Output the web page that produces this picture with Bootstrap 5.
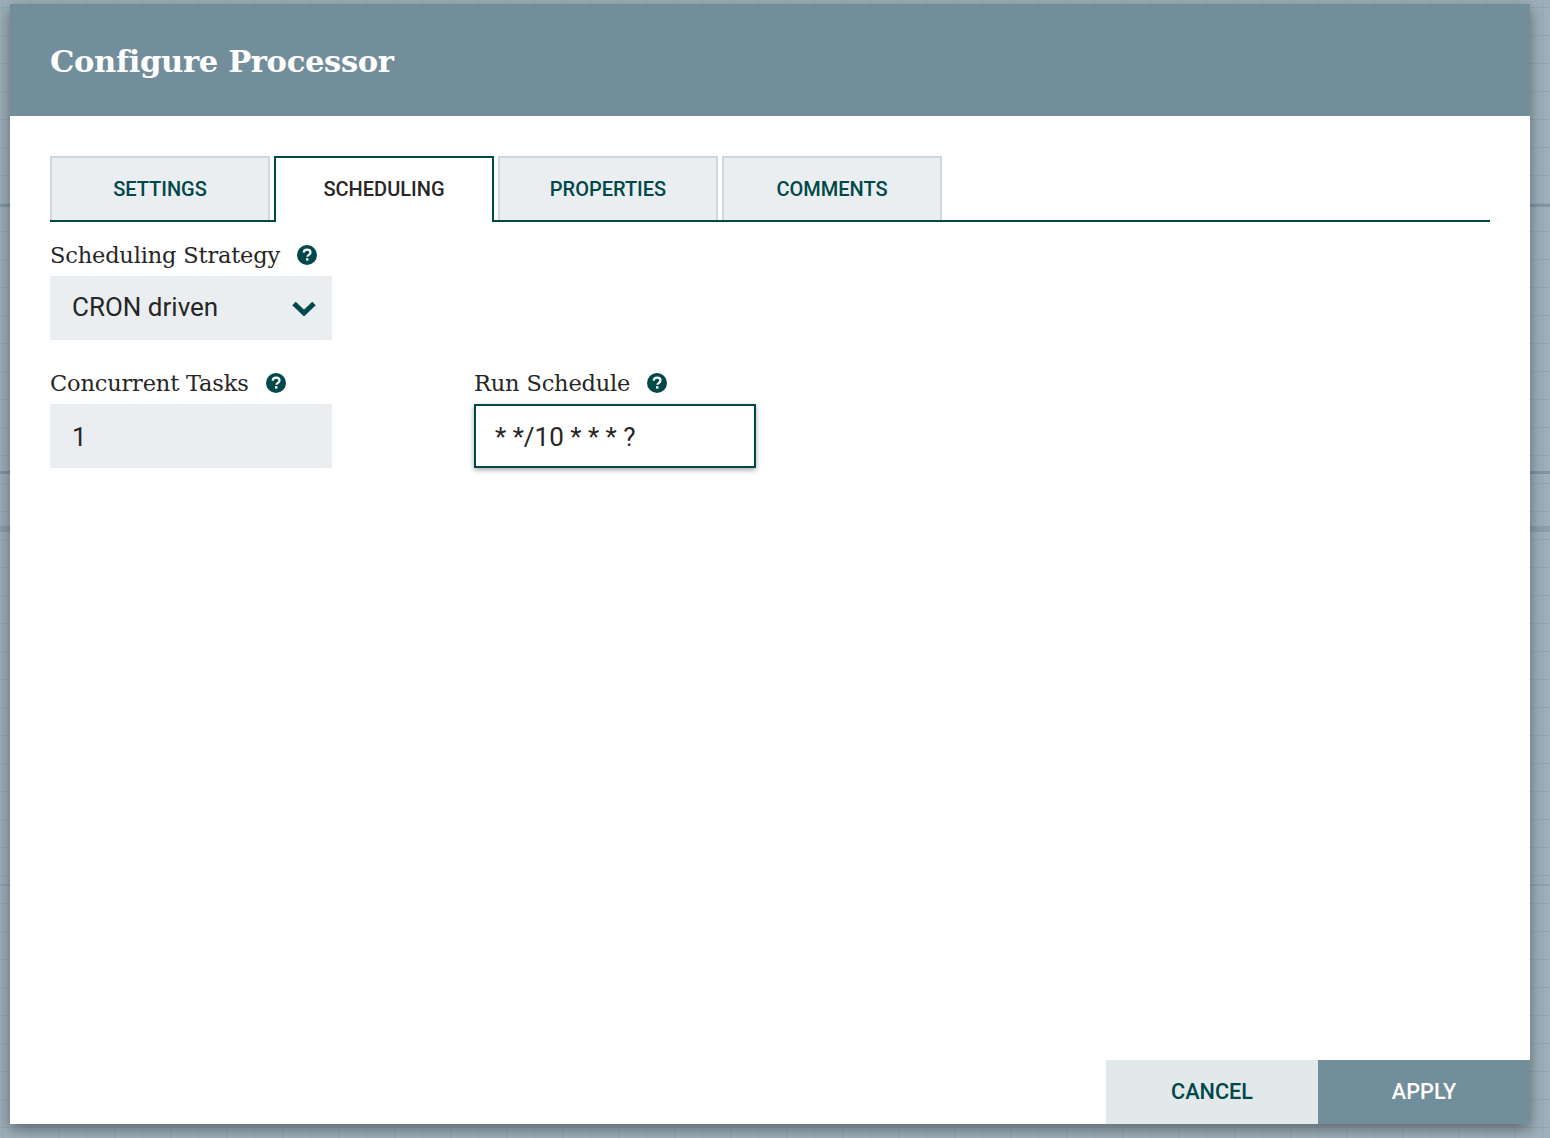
<!DOCTYPE html>
<html lang="en">
<head>
<meta charset="utf-8">
<title>Configure Processor</title>
<link href="https://cdn.jsdelivr.net/npm/bootstrap@5.3.0/dist/css/bootstrap.min.css" rel="stylesheet">
<style>
html,body{height:1138px;overflow:hidden}
body{
  padding:4px 20px 14px 10px;
  font-family:Roboto,sans-serif;color:#262626;
  background-color:#9eb0ba;
  background-image:
    linear-gradient(to bottom,transparent 204px,#7f97a4 204px,#7f97a4 207px,transparent 207px,transparent 471px,#7f97a4 471px,#7f97a4 474px,transparent 474px,transparent 526px,#8ba0ac 526px,#8ba0ac 532px,transparent 532px,transparent 884px,#8fa3af 884px,#8fa3af 886px,transparent 886px),
    linear-gradient(to right,rgba(114,142,155,.22) 1px,transparent 1px),
    linear-gradient(to bottom,rgba(114,142,155,.22) 1px,transparent 1px);
  background-size:100% 100%,28px 28px,28px 28px;
  background-position:0 0,2px 0,0 7px;
}
.dlg{height:1120px;background:#fff;box-shadow:0 5px 14px rgba(0,0,0,.42)}
.dlg-head{height:112px;background:#728e9b;padding:0 40px}
.dlg-title{margin:0 0 -3px;font-family:"DejaVu Serif",serif;font-weight:700;font-size:30.6px;color:#fff;letter-spacing:-.35px}
.dlg-body{padding:40px 40px 0}
.tabbar{gap:4px;border-bottom:2px solid #004849;height:66px;margin-bottom:0;flex-wrap:nowrap}
.tabbar .nav-link{width:220px;height:64px;margin:0;border-radius:0;
  background:#eaeef0;border:2px solid #ccdadb;border-bottom:0;color:#004849;
  font-weight:500;font-size:20px;text-transform:uppercase;line-height:1;
  display:flex;align-items:center;justify-content:center;padding:0}
.tabbar .nav-link.active{background:#fff;border:2px solid #004849;border-bottom:0;color:#262626;height:66px;padding-bottom:2px;position:relative;z-index:1}
.fld{width:282px}
.fld-label{font-family:"DejaVu Serif",serif;font-size:22.5px;line-height:28px;margin:-1px 0 7px;color:#262626;gap:17px;letter-spacing:-.17px}
.help-ico{width:20px;height:20px;flex:none}
.fld-box{height:64px;border:0;border-radius:0;background:#eaeef0;padding:2px 16px 0 22px;font-size:26px;line-height:1;color:#262626;width:100%;box-shadow:none}
.fld-select{padding:0 16px 2px 22px}
.fld-select svg{margin-top:2px}
.fld-box.focused{background:#fff;border:2px solid #004849;padding-left:19px;box-shadow:0 2px 5px rgba(0,0,0,.35)}
.row-a{padding-top:20px}
.row-b{padding-top:30px;gap:142px}
.dlg-foot{margin-top:auto}
.foot-btn{width:212px;height:64px;border:0;border-radius:0;font-weight:500;font-size:21.7px;text-transform:uppercase;padding:0;line-height:1}
.foot-cancel,.foot-cancel:hover{background:#e3e8eb;color:#004849}
.foot-apply,.foot-apply:hover{background:#728e9b;color:#fff}
</style>
</head>
<body>
<div class="dlg d-flex flex-column">
  <div class="dlg-head d-flex align-items-center">
    <h1 class="dlg-title">Configure Processor</h1>
  </div>
  <div class="dlg-body">
    <ul class="nav nav-tabs tabbar">
      <li class="nav-item"><a class="nav-link" href="#">Settings</a></li>
      <li class="nav-item"><a class="nav-link active" href="#">Scheduling</a></li>
      <li class="nav-item"><a class="nav-link" href="#">Properties</a></li>
      <li class="nav-item"><a class="nav-link" href="#">Comments</a></li>
    </ul>
    <div class="row-a">
      <div class="fld">
        <div class="fld-label d-flex align-items-center text-nowrap">Scheduling Strategy
          <svg class="help-ico" viewBox="0 0 20 20"><circle cx="10" cy="10" r="10" fill="#004849"/><path d="M6.6 7.7C6.8 5.8 8.2 4.7 10.1 4.7c2 0 3.4 1.2 3.4 2.8 0 1.4-.9 2-1.9 2.6-.8.5-1.1.9-1.1 1.7" fill="none" stroke="#fff" stroke-width="2.2"/><rect x="9" y="13.2" width="2.4" height="2.4" fill="#fff"/></svg>
        </div>
        <div class="form-control fld-box fld-select d-flex align-items-center justify-content-between">CRON driven
          <svg width="24" height="16" viewBox="0 0 24 16"><path d="M2 3.5 12 13 22 3.5" fill="none" stroke="#004849" stroke-width="5"/></svg>
        </div>
      </div>
    </div>
    <div class="row-b d-flex">
      <div class="fld">
        <div class="fld-label d-flex align-items-center text-nowrap">Concurrent Tasks
          <svg class="help-ico" viewBox="0 0 20 20"><circle cx="10" cy="10" r="10" fill="#004849"/><path d="M6.6 7.7C6.8 5.8 8.2 4.7 10.1 4.7c2 0 3.4 1.2 3.4 2.8 0 1.4-.9 2-1.9 2.6-.8.5-1.1.9-1.1 1.7" fill="none" stroke="#fff" stroke-width="2.2"/><rect x="9" y="13.2" width="2.4" height="2.4" fill="#fff"/></svg>
        </div>
        <div class="form-control fld-box d-flex align-items-center">1</div>
      </div>
      <div class="fld">
        <div class="fld-label d-flex align-items-center text-nowrap">Run Schedule
          <svg class="help-ico" viewBox="0 0 20 20"><circle cx="10" cy="10" r="10" fill="#004849"/><path d="M6.6 7.7C6.8 5.8 8.2 4.7 10.1 4.7c2 0 3.4 1.2 3.4 2.8 0 1.4-.9 2-1.9 2.6-.8.5-1.1.9-1.1 1.7" fill="none" stroke="#fff" stroke-width="2.2"/><rect x="9" y="13.2" width="2.4" height="2.4" fill="#fff"/></svg>
        </div>
        <div class="form-control fld-box focused d-flex align-items-center">* */10 * * * ?</div>
      </div>
    </div>
  </div>
  <div class="dlg-foot d-flex justify-content-end">
    <button class="btn foot-btn foot-cancel" type="button">Cancel</button>
    <button class="btn foot-btn foot-apply" type="button">Apply</button>
  </div>
</div>
<script src="https://cdn.jsdelivr.net/npm/bootstrap@5.3.0/dist/js/bootstrap.bundle.min.js"></script>
</body>
</html>
